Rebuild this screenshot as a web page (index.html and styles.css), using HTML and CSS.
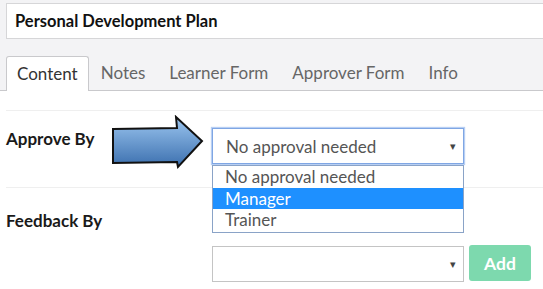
FILE: index.html
```html
<!DOCTYPE html>
<html>
<head>
<meta charset="utf-8">
<link rel="stylesheet" href="styles.css">
</head>
<body>
<div class="page">
  <div class="top">
    <div class="title-input">Personal Development Plan</div>
    <div class="tabs">
      <div class="tab active">Content</div>
      <div class="tab">Notes</div>
      <div class="tab">Learner Form</div>
      <div class="tab">Approver Form</div>
      <div class="tab">Info</div>
    </div>
  </div>
  <div class="content">
    <div class="row approve">
      <div class="label">Approve By</div>
      <div class="control">
        <div class="select focused">
          <span class="value">No approval needed</span>
          <span class="caret">&#9662;</span>
        </div>
        <div class="dropdown">
          <div class="opt">No approval needed</div>
          <div class="opt sel">Manager</div>
          <div class="opt">Trainer</div>
        </div>
      </div>
      <svg class="arrow" width="96" height="56" viewBox="0 0 96 56">
        <defs>
          <linearGradient id="ag" x1="0" y1="0" x2="0" y2="1">
            <stop offset="0" stop-color="#9cc6f0"/>
            <stop offset="1" stop-color="#3b6fae"/>
          </linearGradient>
        </defs>
        <path d="M3 14 L67 13 L66 2 L92 26 L68 52 L67 47 L3 48 Z" fill="url(#ag)" stroke="#111" stroke-width="2" stroke-linejoin="miter"/>
      </svg>
    </div>
    <div class="row feedback">
      <div class="label">Feedback By</div>
      <div class="control add-row">
        <div class="select plain">
          <span class="value"></span>
          <span class="caret">&#9662;</span>
        </div>
        <div class="btn">Add</div>
      </div>
    </div>
  </div>
</div>
</body>
</html>
```
FILE: styles.css
```css
html, body {
  margin: 0;
  padding: 0;
  overflow: hidden;
}
body {
  font-family: Lato, "Open Sans", sans-serif;
  background: #fff;
  width: 543px;
  height: 289px;
}
.page {
  width: 543px;
}
.top {
  background: #f3f3f5;
  padding: 3px 0 0 6px;
}
.title-input {
  box-sizing: border-box;
  height: 36px;
  margin-right: -20px;
  background: #fff;
  border: 1px solid #d6d6d8;
  padding-left: 8px;
  font-weight: 700;
  font-size: 16.5px;
  line-height: 34px;
  color: #111;
}
.tabs {
  display: flex;
  margin-top: 17px;
  margin-left: -6px;
  padding-left: 6px;
  border-bottom: 1px solid #c9c9cc;
  height: 34px;
}
.tab {
  box-sizing: border-box;
  height: 34px;
  padding: 0 12px;
  font-size: 17px;
  line-height: 34px;
  color: #666;
}
.tab.active {
  background: #fff;
  border: 1px solid #c9c9cc;
  border-bottom: none;
  border-radius: 3px 3px 0 0;
  height: 35px;
  padding: 0 10px 0 10px;
  color: #333;
}
.content {
  background: #fff;
  padding: 19px 0 0 6px;
}
.row {
  display: grid;
  grid-template-columns: 206px 1fr;
  position: relative;
}
.approve {
  border-top: 1px solid #efefef;
  border-bottom: 1px solid #efefef;
  padding: 17px 0 23px 0;
}
.label {
  font-weight: 700;
  font-size: 17px;
  color: #1a1a1a;
}
.control {
  position: relative;
}
.select {
  box-sizing: border-box;
  width: 252px;
  height: 36px;
  display: flex;
  align-items: center;
  justify-content: space-between;
  padding: 0 7px 0 13px;
  background: #fff;
  font-size: 17px;
  color: #555;
}
.select.focused {
  border: 1px solid #7fa6e4;
  box-shadow: 0 0 1px 1px #b8cff3;
}
.select.plain {
  border: 1px solid #c4c4c4;
}
.caret {
  font-size: 11px;
  color: #444;
}
.dropdown {
  position: absolute;
  left: 0;
  top: 37px;
  box-sizing: border-box;
  width: 252px;
  border: 1px solid #8aa3c7;
  background: #fff;
  z-index: 2;
  padding-bottom: 1px;
}
.opt {
  height: 21.5px;
  line-height: 21px;
  padding-left: 12px;
  font-size: 17px;
  color: #555;
}
.opt.sel {
  background: #1e90ff;
  color: #fff;
}
.arrow {
  position: absolute;
  left: 104px;
  top: 4px;
}
.feedback {
  padding-top: 22px;
}
.add-row {
  display: flex;
  gap: 5px;
  margin-top: 36px;
  align-items: flex-start;
}
.btn {
  box-sizing: border-box;
  width: 62px;
  height: 36px;
  border-radius: 3px;
  background: #7dd9ae;
  color: #fff;
  font-weight: 700;
  font-size: 17.5px;
  display: flex;
  align-items: center;
  justify-content: center;
  margin-top: -1px;
}
```
